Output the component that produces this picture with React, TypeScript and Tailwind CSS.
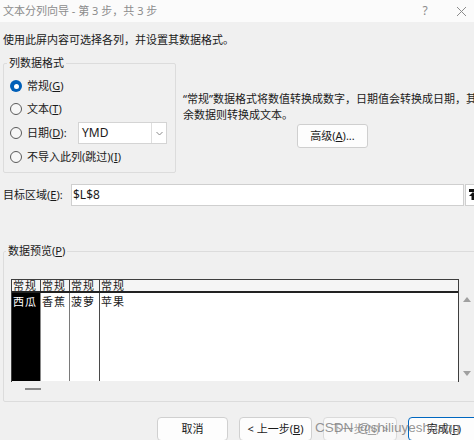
import React from 'react';

const Radio: React.FC<{ checked?: boolean; children: React.ReactNode; className?: string }> = ({ checked, children, className }) => (
  <div className={`flex items-center ${className ?? 'h-[24px]'}`}>
    {checked ? (
      <span className="flex h-[12px] w-[12px] shrink-0 items-center justify-center rounded-full bg-[#005fb8]">
        <span className="h-[5px] w-[5px] rounded-full bg-white" />
      </span>
    ) : (
      <span className="h-[12px] w-[12px] shrink-0 rounded-full border border-[#5a5a5a] bg-[#f7f7f7]" />
    )}
    <span className="ml-[5px] whitespace-nowrap">{children}</span>
  </div>
);

const Btn: React.FC<{ w: string; children: React.ReactNode; kind?: 'normal' | 'disabled' | 'default' }> = ({ w, children, kind = 'normal' }) => {
  const look =
    kind === 'default'
      ? 'border-[#0067c0] bg-[#fdfdfd] text-[#1a1a1a]'
      : kind === 'disabled'
        ? 'border-[#dadada] bg-[#f9f9f9] text-[#a3a3a3]'
        : 'border-[#d0d0d0] bg-[#fdfdfd] text-[#1a1a1a]';
  return (
    <div className={`flex h-[24px] shrink-0 items-center justify-center rounded-[4px] border whitespace-nowrap ${w} ${look}`}>
      {children}
    </div>
  );
};

const App: React.FC = () => {
  const cols = [
    { head: '常规', body: '西瓜', w: 'w-[29px]', line: 'border-[#8a8a8a]', dark: true },
    { head: '常规', body: '香蕉', w: 'w-[29px]', line: 'border-[#7a7a7a]', dark: false },
    { head: '常规', body: '菠萝', w: 'w-[30px]', line: 'border-[#4a4a4a]', dark: false },
  ];

  return (
    <div className="relative h-[440px] w-[474px] overflow-hidden bg-[#f0f0f0] font-['Noto_Sans','Noto_Sans_CJK_SC',sans-serif] text-[11px] leading-[16px] text-[#1a1a1a]">
      {/* title bar */}
      <div className="flex h-[22px] items-center bg-[#fbfbfb] pl-[3px] pr-[3px] text-[#8c8c8c]">
        <span className="whitespace-nowrap">文本分列向导 - 第 3 步，共 3 步</span>
        <span className="ml-auto w-[20px] text-center text-[12px]">?</span>
        <span className="ml-[16px] flex w-[20px] justify-center">
          <svg width="11" height="11" viewBox="0 0 11 11">
            <path d="M1 1 L10 10 M10 1 L1 10" stroke="#8c8c8c" strokeWidth="1" />
          </svg>
        </span>
      </div>

      <div className="mt-[10px] pl-[3px] whitespace-nowrap">使用此屏内容可选择各列，并设置其数据格式。</div>

      {/* format options */}
      <div className="mt-[8px] flex">
        <fieldset className="ml-[3px] w-[173px] shrink-0 rounded-[2px] border border-[#dcdcdc]">
          <legend className="ml-[3px] px-[2px] leading-[14px]">列数据格式</legend>
          <div className="pb-[3px] pl-[6px] pr-[8px] pt-[5px]">
            <Radio checked className="h-[22px]">
              常规(<u>G</u>)
            </Radio>
            <Radio>
              文本(<u>T</u>)
            </Radio>
            <div className="flex h-[24px] items-center">
              <Radio>
                日期(<u>D</u>):
              </Radio>
              <div className="ml-auto flex h-[22px] w-[89px] border border-[#d4d4d4] bg-white">
                <span className="flex-1 pl-[3px] text-[12px] leading-[20px]">YMD</span>
                <span className="flex w-[15px] items-center justify-center border-l border-[#dedede]">
                  <svg width="7" height="5" viewBox="0 0 7 5">
                    <path d="M0.5 1 L3.5 4 L6.5 1" fill="none" stroke="#8a8a8a" strokeWidth="1" />
                  </svg>
                </span>
              </div>
            </div>
            <Radio>
              不导入此列(跳过)(<u>I</u>)
            </Radio>
          </div>
        </fieldset>

        <div className="ml-[7px] shrink-0 pt-[35px] whitespace-nowrap">
          <div>“常规”数据格式将数值转换成数字，日期值会转换成日期，其</div>
          <div>余数据则转换成文本。</div>
          <div className="ml-[114px] mt-[1px] flex h-[24px] w-[71px] items-center justify-center rounded-[3px] border border-[#cfcfcf] bg-[#fdfdfd]">
            高级(<u>A</u>)...
          </div>
        </div>
      </div>

      {/* target */}
      <div className="mt-[11px] flex h-[22px] items-center">
        <span className="w-[71px] shrink-0 pl-[3px] whitespace-nowrap">
          目标区域(<u>E</u>):
        </span>
        <div className="h-[22px] w-[393px] shrink-0 border border-[#cfcfcf] bg-white pl-[1px] text-[12px] leading-[20px]">$L$8</div>
        <div className="ml-[1px] flex h-[22px] w-[24px] shrink-0 items-center border border-[#cfcfcf] bg-white pl-[2px]">
          <svg width="10" height="12" viewBox="0 0 10 12">
            <path d="M1 0 H9 V3 H1 Z M5 3 L1 7 H3.5 V11 H6.5 V7 H9 Z" fill="#111" />
          </svg>
        </div>
      </div>

      {/* preview */}
      <fieldset className="ml-[3px] mt-[38px] w-[520px] rounded-[2px] border border-[#dcdcdc]">
        <legend className="ml-[2px] px-[2px] leading-[14px]">
          数据预览(<u>P</u>)
        </legend>
        <div className="pb-[11px] pl-[7px] pt-[21px]">
          <div className="flex">
            <div className="w-[448px] shrink-0 border-x border-t border-[#3e3e3e] font-['Noto_Sans_CJK_SC',sans-serif] tracking-[1px]">
              <div className="flex h-[13px] border-b-2 border-[#222] bg-[#f5f5f5] leading-[11px]">
                {cols.map((c, i) => (
                  <div key={i} className={`${c.w} shrink-0 border-r border-[#444] pl-[1px]`}>
                    {c.head}
                  </div>
                ))}
                <div className="flex-1 pl-[1px]">常规</div>
              </div>
              <div className="flex h-[88px] bg-white leading-[14px]">
                {cols.map((c, i) => (
                  <div key={i} className={`${c.w} shrink-0 border-r pl-[1px] pt-[1px] ${c.line} ${c.dark ? 'bg-black text-white' : ''}`}>
                    {c.body}
                  </div>
                ))}
                <div className="flex-1 pl-[1px] pt-[1px]">苹果</div>
              </div>
            </div>
            <div className="flex h-[103px] w-[15px] flex-col items-center justify-between pb-[6px] pt-[18px]">
              <svg width="8" height="5" viewBox="0 0 8 5">
                <path d="M0 5 L4 0 L8 5 Z" fill="#a0a0a0" />
              </svg>
              <svg width="8" height="5" viewBox="0 0 8 5">
                <path d="M0 0 L8 0 L4 5 Z" fill="#a0a0a0" />
              </svg>
            </div>
          </div>
          <div className="ml-[14px] mt-[6px] h-[2px] w-[16px] bg-[#8a8a8a]" />
        </div>
      </fieldset>

      {/* buttons */}
      <div className="mt-[15px] flex gap-[11px] pl-[157px]">
        <Btn w="w-[71px]">取消</Btn>
        <Btn w="w-[73px]">
          &lt; 上一步(<u>B</u>)
        </Btn>
        <Btn w="w-[74px]" kind="disabled">
          下一步(<u>N</u>) &gt;
        </Btn>
        <Btn w="w-[72px]" kind="default">
          完成(<u>F</u>)
        </Btn>
      </div>

      <span className="absolute left-[315px] top-[419px] whitespace-nowrap font-['Liberation_Sans',sans-serif] text-[13.5px] leading-[18px] text-[#7a7a7a]/80">
        CSDN @shiliuyeshuang
      </span>
    </div>
  );
};

export default App;
